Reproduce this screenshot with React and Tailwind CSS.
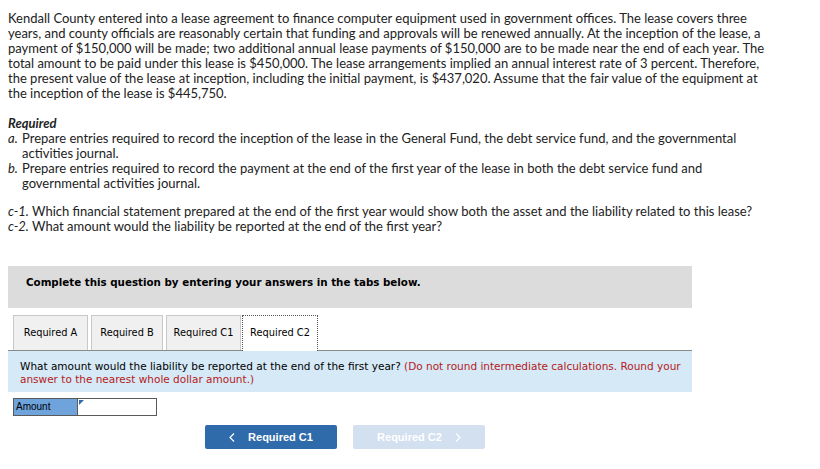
import React from "react";

export default function App() {
  const body = { fontFamily: '"Lato", "Open Sans", sans-serif' };
  const verd = { fontFamily: '"DejaVu Sans", Verdana, sans-serif' };
  return (
    <div className="bg-white w-[820px] h-[469px] overflow-hidden text-[#222]" style={body}>
      <div className="pl-[8px] pt-[11px] w-[766px] text-[13px] leading-[15px]">
        <p>
          Kendall County entered into a lease agreement to finance computer equipment used in government offices. The lease covers three years, and county officials are reasonably certain that funding and approvals will be renewed annually. At the inception of the lease, a payment of $150,000 will be made; two additional annual lease payments of $150,000 are to be made near the end of each year. The total amount to be paid under this lease is $450,000. The lease arrangements implied an annual interest rate of 3 percent. Therefore, the present value of the lease at inception, including the initial payment, is $437,020. Assume that the fair value of the equipment at the inception of the lease is $445,750.
        </p>
        <p className="mt-[15px] font-bold italic">Required</p>
        <div className="flex">
          <span className="italic w-[14px] shrink-0">a.</span>
          <span>Prepare entries required to record the inception of the lease in the General Fund, the debt service fund, and the governmental activities journal.</span>
        </div>
        <div className="flex">
          <span className="italic w-[14px] shrink-0">b.</span>
          <span>Prepare entries required to record the payment at the end of the first year of the lease in both the debt service fund and governmental activities journal.</span>
        </div>
        <p className="mt-[13px]"><span className="italic">c-1.</span> Which financial statement prepared at the end of the first year would show both the asset and the liability related to this lease?</p>
        <p><span className="italic">c-2.</span> What amount would the liability be reported at the end of the first year?</p>
      </div>

      <div className="ml-[8px] w-[684px]">
        <div className="mt-[32px] h-[42px] bg-[#dcdcdc] pl-[18px] pt-[10px]">
          <p className="font-bold text-[10.3px] leading-[13px] text-black" style={verd}>Complete this question by entering your answers in the tabs below.</p>
        </div>

        <div className="mt-[7px] flex items-end pl-[5px] gap-[3px] h-[35px]" style={verd}>
          {["Required A", "Required B", "Required C1"].map((t, i) => (
            <div key={t} className={`h-[35px] ${i === 1 ? "w-[72px]" : "w-[75px]"} border border-[#c8c8c8] border-b-0 bg-[#f0f0f0] flex items-center justify-center text-[9.8px] text-black`}>
              {t}
            </div>
          ))}
          <div className="-ml-[2px] h-[36px] w-[76px] border border-dotted border-[#555] border-b-0 bg-white flex items-center justify-center text-[9.8px] text-black relative z-10 -mb-[1px]">
            Required C2
          </div>
        </div>
        <div className="border-t border-[#8a8a8a]"></div>
        <div className="bg-[#d6e9f7] h-[41px] pl-[12px] pt-[9px] text-[10.5px] leading-[13px] text-black" style={verd}>
          What amount would the liability be reported at the end of the first year?{" "}
          <span className="text-[#b51a1a]">(Do not round intermediate calculations. Round your answer to the nearest whole dollar amount.)</span>
        </div>

        <div className="mt-[6px] ml-[5px] flex h-[18px]">
          <div className="w-[65px] bg-[#6fa3dc] border border-[#5a5a5a] text-[10px] leading-[15px] pl-[2px] text-black" style={{ fontFamily: '"Liberation Sans", Arial, sans-serif' }}>
            Amount
          </div>
          <div className="w-[79px] bg-white border border-[#5a5a5a] border-l-0 relative">
            <svg className="absolute left-[1px] top-[1px]" width="5" height="5" viewBox="0 0 5 5">
              <polygon points="0,0 5,0 0,5" fill="#2f6baa" />
            </svg>
          </div>
        </div>

        <div className="mt-[9px] ml-[197px] flex gap-[16px]" style={{ fontFamily: '"Liberation Sans", Arial, sans-serif' }}>
          <div className="w-[132px] h-[24px] bg-[#2f6baa] rounded-[2px] flex items-center justify-center text-white font-bold text-[11px]">
            <svg width="6" height="9" viewBox="0 0 6 9" className="mr-[13px]">
              <polyline points="5,0.5 1,4.5 5,8.5" fill="none" stroke="white" strokeWidth="1.2" />
            </svg>
            Required C1
          </div>
          <div className="w-[132px] h-[24px] bg-[#d2e0f0] rounded-[2px] flex items-center justify-center text-white font-bold text-[11px]">
            Required C2
            <svg width="6" height="9" viewBox="0 0 6 9" className="ml-[13px]">
              <polyline points="1,0.5 5,4.5 1,8.5" fill="none" stroke="white" strokeWidth="1.2" />
            </svg>
          </div>
        </div>
      </div>
    </div>
  );
}
